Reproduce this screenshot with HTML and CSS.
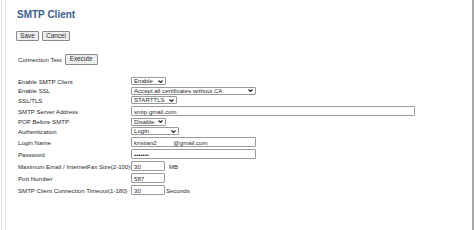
FILE: index.html
```html
<!DOCTYPE html>
<html lang="en">
<head>
    <meta charset="UTF-8">
    <title>SMTP Client</title>
    <link rel="stylesheet" href="styles.css">
</head>
<body>
    <div class="frame">
        <div class="page">
            <h1 class="title">SMTP Client</h1>

            <div class="actions">
                <button class="btn">Save</button>
                <button class="btn">Cancel</button>
            </div>

            <div class="conn-test">
                <span>Connection Test</span>
                <button class="btn btn-exec">Execute</button>
            </div>

            <!-- Settings -->
            <div class="settings">
                <div class="row row-sel">
                    <label>Enable SMTP Client</label>
                    <span class="sel w-enable">
                        <span class="sel-val">Enable</span>
                        <svg class="chev" width="5" height="3" viewBox="0 0 5 3"><path d="M0.5 0.5 L2.5 2.5 L4.5 0.5" fill="none" stroke="#222" stroke-width="1.1"/></svg>
                    </span>
                </div>
                <div class="row row-sel">
                    <label>Enable SSL</label>
                    <span class="sel w-ssl">
                        <span class="sel-val">Accept all certificates without CA</span>
                        <svg class="chev" width="5" height="3" viewBox="0 0 5 3"><path d="M0.5 0.5 L2.5 2.5 L4.5 0.5" fill="none" stroke="#222" stroke-width="1.1"/></svg>
                    </span>
                </div>
                <div class="row row-sel">
                    <label>SSL/TLS</label>
                    <span class="sel w-tls">
                        <span class="sel-val">STARTTLS</span>
                        <svg class="chev" width="5" height="3" viewBox="0 0 5 3"><path d="M0.5 0.5 L2.5 2.5 L4.5 0.5" fill="none" stroke="#222" stroke-width="1.1"/></svg>
                    </span>
                </div>
                <div class="row row-txt">
                    <label>SMTP Server Address</label>
                    <input class="txt w-server" type="text" value="smtp.gmail.com">
                </div>
                <div class="row row-sel">
                    <label>POP Before SMTP</label>
                    <span class="sel w-pop">
                        <span class="sel-val">Disable</span>
                        <svg class="chev" width="5" height="3" viewBox="0 0 5 3"><path d="M0.5 0.5 L2.5 2.5 L4.5 0.5" fill="none" stroke="#222" stroke-width="1.1"/></svg>
                    </span>
                </div>
                <div class="row row-sel">
                    <label>Authentication</label>
                    <span class="sel w-auth">
                        <span class="sel-val">Login</span>
                        <svg class="chev" width="5" height="3" viewBox="0 0 5 3"><path d="M0.5 0.5 L2.5 2.5 L4.5 0.5" fill="none" stroke="#222" stroke-width="1.1"/></svg>
                    </span>
                </div>
                <div class="row row-txt">
                    <label>Login Name</label>
                    <input class="txt w-mid" type="text" value="kristian2          @gmail.com">
                </div>
                <div class="row row-txt">
                    <label>Password</label>
                    <input class="txt w-mid" type="password" value="1234567">
                </div>
                <div class="row row-txt">
                    <label>Maximum Email / InternetFax Size(2-100)</label>
                    <input class="txt w-num" type="text" value="30">
                    <span class="unit">MB</span>
                </div>
                <div class="row row-txt">
                    <label>Port Number</label>
                    <input class="txt w-num" type="text" value="587">
                </div>
                <div class="row row-txt">
                    <label>SMTP Client Connection Timeout(1-180)</label>
                    <input class="txt w-num" type="text" value="30">
                    <span class="unit unit-sec">Seconds</span>
                </div>
            </div>
        </div>
        <div class="scrollbar"></div>
    </div>
</body>
</html>
```

FILE: styles.css
```css
:root {
    --text: #2a2a2a;
    --title: #3b5d88;
    --border: #9a9a9a;
}

/* Base */
html, body {
    margin: 0;
    height: 100%;
}

body {
    font-family: "Liberation Sans", Arial, sans-serif;
    font-size: 6.1px;
    color: var(--text);
    background: #fff;
}

.frame {
    display: flex;
    height: 230px;
    margin-left: 1px;
    border-left: 1px solid #e2e2e2;
}

.page {
    flex: 1;
    margin-left: 3px;
    border-left: 1px solid #ececec;
    padding-left: 10px;
}

.scrollbar {
    width: 2px;
    background: #a9a9a9;
}

/* Header */
.title {
    margin: 9px 0 0 1px;
    font-size: 10px;
    line-height: 12px;
    font-weight: bold;
    color: var(--title);
}

.btn {
    font-family: inherit;
    font-size: 6.3px;
    color: var(--text);
    background: #efefef;
    border: 1px solid #8a8a8a;
    border-radius: 1px;
    height: 10px;
    padding: 0 2px;
    line-height: 8px;
    margin: 0;
}

.actions {
    display: flex;
    gap: 3px;
    margin-top: 10px;
}

.actions .btn:first-child {
    width: 23px;
}

.actions .btn:last-child {
    width: 28px;
}

.conn-test {
    display: flex;
    align-items: center;
    margin: 12px 0 0 2px;
    height: 12px;
}

.btn-exec {
    width: 33px;
    height: 11px;
    margin-left: 3px;
}

/* Settings */
.settings {
    margin: 11.5px 0 0 2px;
}

.row {
    display: flex;
    align-items: center;
}

.row-sel {
    height: 9.5px;
}

.row-txt {
    height: 12px;
}

.row label {
    width: 113px;
    flex: none;
    white-space: nowrap;
}

.sel {
    display: inline-flex;
    align-items: center;
    justify-content: space-between;
    height: 8px;
    box-sizing: border-box;
    padding: 0 2px 0 2px;
    border: 1px solid var(--border);
    border-radius: 1px;
    background: #fff;
    line-height: 6px;
}

.sel-val {
    white-space: nowrap;
}

.sel .chev {
    flex: none;
}

.w-enable { width: 35px; }
.w-ssl { width: 125px; }
.w-tls { width: 46px; }
.w-pop { width: 35px; }
.w-auth { width: 48px; }

.txt {
    height: 10.5px;
    box-sizing: border-box;
    margin: 0;
    padding: 0 0 0 2px;
    border: 1px solid var(--border);
    border-radius: 1px;
    font-family: inherit;
    font-size: 6.1px;
    color: var(--text);
}

.w-server { width: 284px; }
.w-mid { width: 125px; }
.w-num { width: 34px; }

.unit {
    margin-left: 4px;
}

.unit-sec {
    margin-left: 1px;
}
```
